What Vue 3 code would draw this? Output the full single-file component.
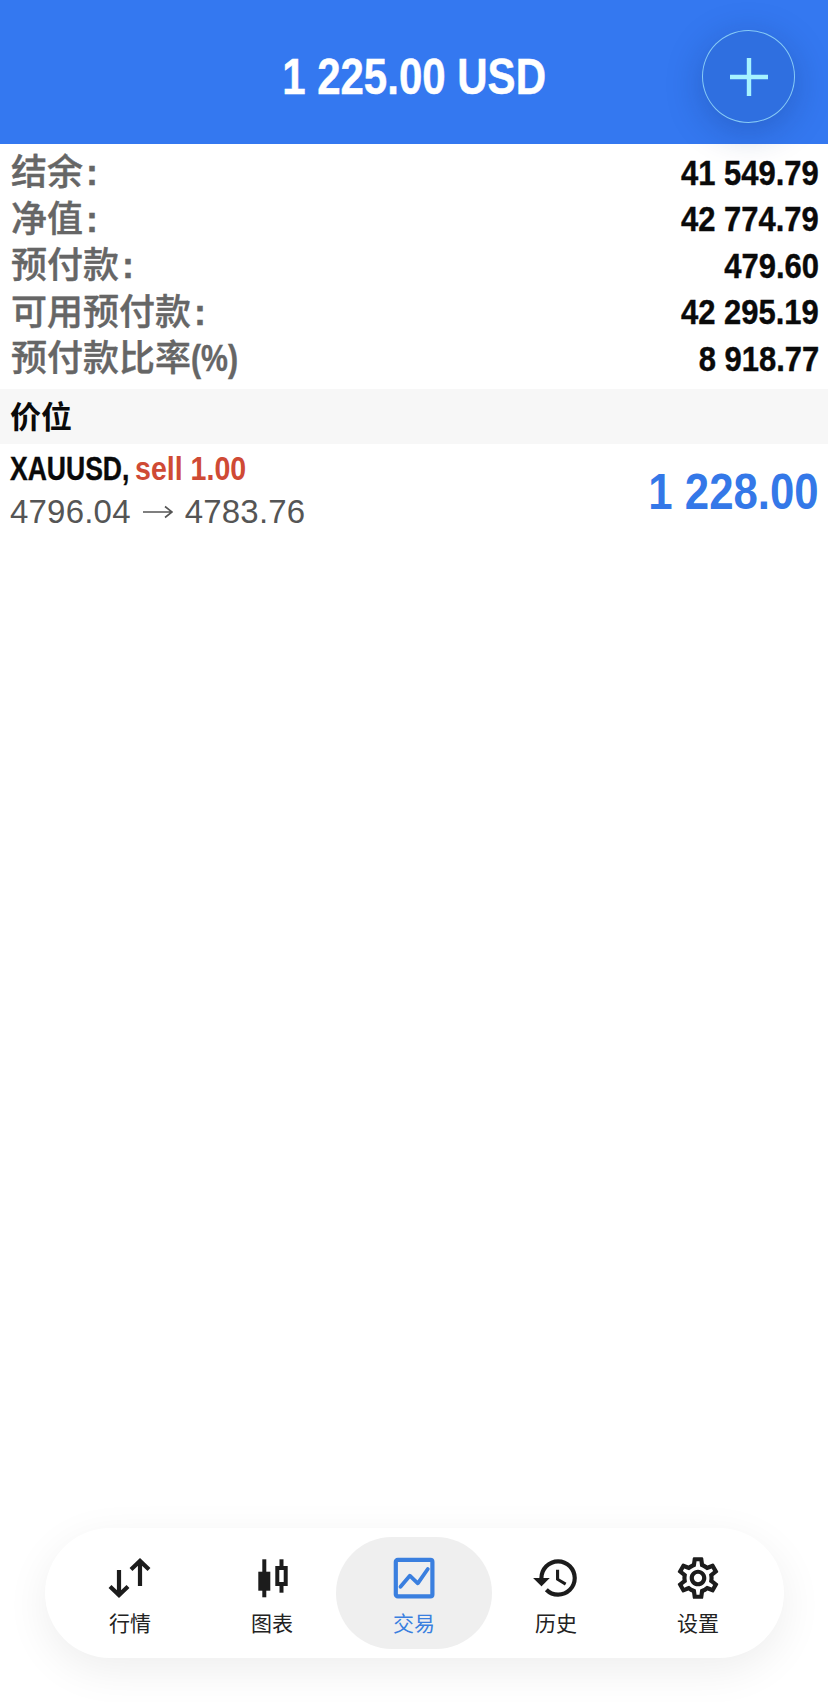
<template>
  <div class="page">
    <header class="top-bar">
      <h1 class="total"><span class="narrow center">1 225.00 USD</span></h1>
      <button type="button" class="add-btn" aria-label="add">
        <svg viewBox="0 0 38 38" width="38" height="38" aria-hidden="true">
          <path d="M19 0v38M0 19h38" stroke="#a6f2ff" stroke-width="4.4" fill="none" />
        </svg>
      </button>
    </header>

    <section class="summary">
      <div v-for="row in summary" :key="row.label" class="summary-row">
        <span class="summary-label">{{ row.label }}<span v-if="row.colon" class="colon">:</span><span v-if="row.suffix" class="narrow suffix">{{ row.suffix }}</span></span>
        <span class="summary-value narrow right">{{ row.value }}</span>
      </div>
    </section>

    <div class="section-title">价位</div>

    <div class="position">
      <div class="position-info">
        <div class="position-head">
          <span class="narrow symbol">XAUUSD,</span>
          <span class="narrow side">sell 1.00</span>
        </div>
        <div class="position-prices">
          <span>4796.04</span>
          <svg class="price-arrow" viewBox="0 0 30 14" width="30" height="14" aria-hidden="true">
            <path d="M0 7h29M22 1.5 29 7l-7 5.5" stroke="#555" stroke-width="1.6" fill="none" />
          </svg>
          <span>4783.76</span>
        </div>
      </div>
      <span class="profit narrow right">1 228.00</span>
    </div>

    <div class="spacer"></div>

    <nav class="tab-bar">
      <a v-for="tab in tabs" :key="tab.label" class="tab" :class="{ active: tab.active }">
        <span class="tab-icon">
          <svg v-if="tab.icon === 'quotes'" viewBox="0 0 48 48" width="48" height="48">
            <path d="M13 16v25M4 32.500 13 41l9-8.500M34 32V7M25 15.500 34 7l9 8.500" stroke="#1c1c1c" stroke-width="4.200" fill="none" />
          </svg>
          <svg v-else-if="tab.icon === 'chart'" viewBox="0 0 48 48" width="48" height="48">
            <path d="M16.300 5.300v38" stroke="#1c1c1c" stroke-width="4" />
            <rect x="10.300" y="17.700" width="12" height="19" fill="#1c1c1c" />
            <path d="M33.500 5.300v33.400" stroke="#1c1c1c" stroke-width="4" />
            <rect x="29.300" y="14" width="8.400" height="16" fill="#fff" stroke="#1c1c1c" stroke-width="4" />
          </svg>
          <svg v-else-if="tab.icon === 'trade'" viewBox="0 0 48 48" width="48" height="48">
            <rect x="5.800" y="5.800" width="36.600" height="36.600" rx="2" fill="none" stroke="#3a7fdf" stroke-width="4.200" />
            <path d="M10.500 32.700 19.800 21.700 27.800 29.300 37.800 15" fill="none" stroke="#3a7fdf" stroke-width="3.800" stroke-linecap="round" stroke-linejoin="round" />
          </svg>
          <svg v-else-if="tab.icon === 'history'" class="wide" viewBox="0 0 24 24" width="50" height="50">
            <path fill="#1c1c1c" d="M13 3a9 9 0 0 0-9 9H1l3.890 3.890.07.14L9 12H6c0-3.870 3.130-7 7-7s7 3.130 7 7-3.130 7-7 7c-1.930 0-3.680-.79-4.940-2.060l-1.420 1.420A8.954 8.954 0 0 0 13 21a9 9 0 0 0 0-18zm-1 5v5l4.280 2.540.72-1.210-3.500-2.080V8H12z" />
          </svg>
          <svg v-else class="wide" viewBox="0 0 24 24" width="50" height="50">
            <path fill="#1c1c1c" d="M19.430 12.980c.04-.32.07-.64.07-.98 0-.34-.03-.66-.07-.98l2.110-1.650c.19-.15.24-.42.12-.64l-2-3.460c-.09-.16-.26-.25-.44-.25-.06 0-.12.01-.17.03l-2.490 1c-.52-.4-1.080-.73-1.690-.98l-.38-2.650C14.460 2.180 14.250 2 14 2h-4c-.25 0-.46.18-.49.42l-.38 2.650c-.61.25-1.170.59-1.690.98l-2.490-1c-.06-.02-.12-.03-.18-.03-.17 0-.34.09-.43.25l-2 3.460c-.13.22-.07.49.12.64l2.110 1.650c-.04.32-.07.65-.07.98 0 .33.03.66.07.98l-2.110 1.650c-.19.15-.24.42-.12.64l2 3.460c.09.16.26.25.44.25.06 0 .12-.01.17-.03l2.490-1c.52.4 1.080.73 1.690.98l.38 2.650c.03.24.24.42.49.42h4c.25 0 .46-.18.49-.42l.38-2.650c.61-.25 1.170-.59 1.690-.98l2.490 1c.06.02.12.03.18.03.17 0 .34-.09.43-.25l2-3.460c.12-.22.07-.49-.12-.64l-2.110-1.650zm-1.980-1.710c.04.31.05.52.05.73 0 .21-.02.43-.05.73l-.14 1.130.89.7 1.080.84-.7 1.210-1.270-.51-1.040-.42-.9.68c-.43.32-.84.56-1.250.73l-1.060.43-.16 1.130-.2 1.350h-1.400l-.19-1.350-.16-1.130-1.060-.43c-.43-.18-.83-.41-1.230-.71l-.91-.7-1.060.43-1.270.51-.7-1.210 1.080-.84.89-.7-.14-1.130c-.03-.31-.05-.54-.05-.74s.02-.43.05-.73l.14-1.130-.89-.7-1.080-.84.7-1.210 1.270.51 1.040.42.9-.68c.43-.32.84-.56 1.250-.73l1.060-.43.16-1.130.2-1.350h1.390l.19 1.350.16 1.130 1.060.43c.43.18.83.41 1.230.71l.91.7 1.060-.43 1.270-.51.7 1.210-1.070.85-.89.7.14 1.130zM12 8c-2.210 0-4 1.790-4 4s1.790 4 4 4 4-1.790 4-4-1.790-4-4-4zm0 6c-1.100 0-2-.9-2-2s.9-2 2-2 2 .9 2 2-.9 2-2 2z" />
          </svg>
        </span>
        <span class="tab-label">{{ tab.label }}</span>
      </a>
    </nav>
  </div>
</template>

<script setup>
const summary = [
  { label: "结余", colon: true, value: "41 549.79" },
  { label: "净值", colon: true, value: "42 774.79" },
  { label: "预付款", colon: true, value: "479.60" },
  { label: "可用预付款", colon: true, value: "42 295.19" },
  { label: "预付款比率", suffix: "(%)", value: "8 918.77" },
];

const tabs = [
  { label: "行情", icon: "quotes" },
  { label: "图表", icon: "chart" },
  { label: "交易", icon: "trade", active: true },
  { label: "历史", icon: "history" },
  { label: "设置", icon: "settings" },
];
</script>

<style scoped>
.page {
  display: flex;
  flex-direction: column;
  width: 828px;
  height: 1702px;
  overflow: hidden;
  background: #fff;
  font-family: "Liberation Sans", "Noto Sans CJK SC", sans-serif;
}

.narrow {
  display: inline-block;
  transform: scaleX(0.84);
  transform-origin: left center;
  white-space: nowrap;
}

.narrow.right {
  transform-origin: right center;
}

.narrow.center {
  transform-origin: center;
}

.top-bar {
  position: relative;
  z-index: 2;
  flex: none;
  display: flex;
  align-items: center;
  justify-content: center;
  height: 144px;
  background: #3478f0;
}

.total {
  margin: 10px 0 0;
  color: #fff;
  font-size: 50px;
  font-weight: 700;
  line-height: 1;
  -webkit-text-stroke: 0.5px #fff;
}

.add-btn {
  position: absolute;
  top: 30px;
  right: 33px;
  display: flex;
  align-items: center;
  justify-content: center;
  box-sizing: border-box;
  width: 93px;
  height: 93px;
  padding: 0;
  border: 1.5px solid rgba(150, 220, 250, 0.85);
  border-radius: 50%;
  background: #2f6fe0;
  box-shadow: 0 8px 36px rgba(20, 50, 120, 0.32);
}

.summary {
  flex: none;
  padding: 5px 9px 7px 11px;
}

.summary-row {
  display: flex;
  align-items: center;
  justify-content: space-between;
  height: 46.5px;
}

.summary-label {
  position: relative;
  top: 1px;
  color: #666;
  font-size: 36px;
  font-weight: 500;
  line-height: 1;
  white-space: nowrap;
  -webkit-text-stroke: 0.4px #666;
}

.colon {
  margin-left: 3px;
  font-weight: 700;
}

.suffix {
  margin-right: -8px;
  font-weight: 700;
}

.summary-value {
  color: #0a0a0a;
  font-size: 35px;
  font-weight: 700;
  line-height: 1;
  transform: scaleX(0.885);
  -webkit-text-stroke: 0.4px #0a0a0a;
}

.section-title {
  flex: none;
  display: flex;
  align-items: center;
  height: 55px;
  padding: 0 0 4px 10px;
  box-sizing: border-box;
  background: #f7f7f7;
  color: #0a0a0a;
  font-size: 31px;
  font-weight: 700;
}

.position {
  flex: none;
  display: flex;
  align-items: center;
  justify-content: space-between;
  height: 96px;
  padding: 0 9px 0 10px;
}

.position-info {
  margin-top: -4px;
}

.position-head {
  display: flex;
  gap: 8px;
  height: 44px;
  align-items: center;
  font-size: 34px;
  font-weight: 700;
  line-height: 1;
}

.symbol {
  width: 117px;
  transform: scaleX(0.78);
  color: #0a0a0a;
  -webkit-text-stroke: 0.4px #0a0a0a;
}

.side {
  color: #cf4a35;
  transform: scaleX(0.84);
}

.position-prices {
  display: flex;
  align-items: center;
  gap: 12px;
  height: 44px;
  color: #555;
  font-size: 33px;
  line-height: 1;
  letter-spacing: 0.2px;
}

.price-arrow {
  flex: none;
}

.profit {
  color: #3478e8;
  font-size: 50px;
  font-weight: 700;
  line-height: 1;
  transform: scaleX(0.875);
}

.spacer {
  flex: 1;
}

.tab-bar {
  flex: none;
  display: flex;
  align-items: center;
  align-self: center;
  box-sizing: border-box;
  width: 739px;
  height: 130px;
  margin: 0 0 44px;
  padding: 0 0 0 14.500px;
  border-radius: 65px;
  background: #fff;
  box-shadow: 0 12px 44px rgba(0, 0, 0, 0.07);
}

.tab {
  flex: none;
  display: flex;
  flex-direction: column;
  align-items: center;
  box-sizing: border-box;
  width: 142px;
  height: 112px;
  padding-top: 17px;
  color: #222;
  border-radius: 56px;
}

.tab.active {
  width: 156px;
  margin: 0 -7px;
  background: #efefef;
  color: #3a7fdf;
}

.tab-icon {
  display: flex;
  align-items: center;
  justify-content: center;
  height: 48px;
}

.wide {
  flex: none;
}

.tab-label {
  margin-top: 10px;
  font-size: 21px;
  line-height: 24px;
}
</style>

<style>
html,
body {
  margin: 0;
  background: #fff;
}
</style>
